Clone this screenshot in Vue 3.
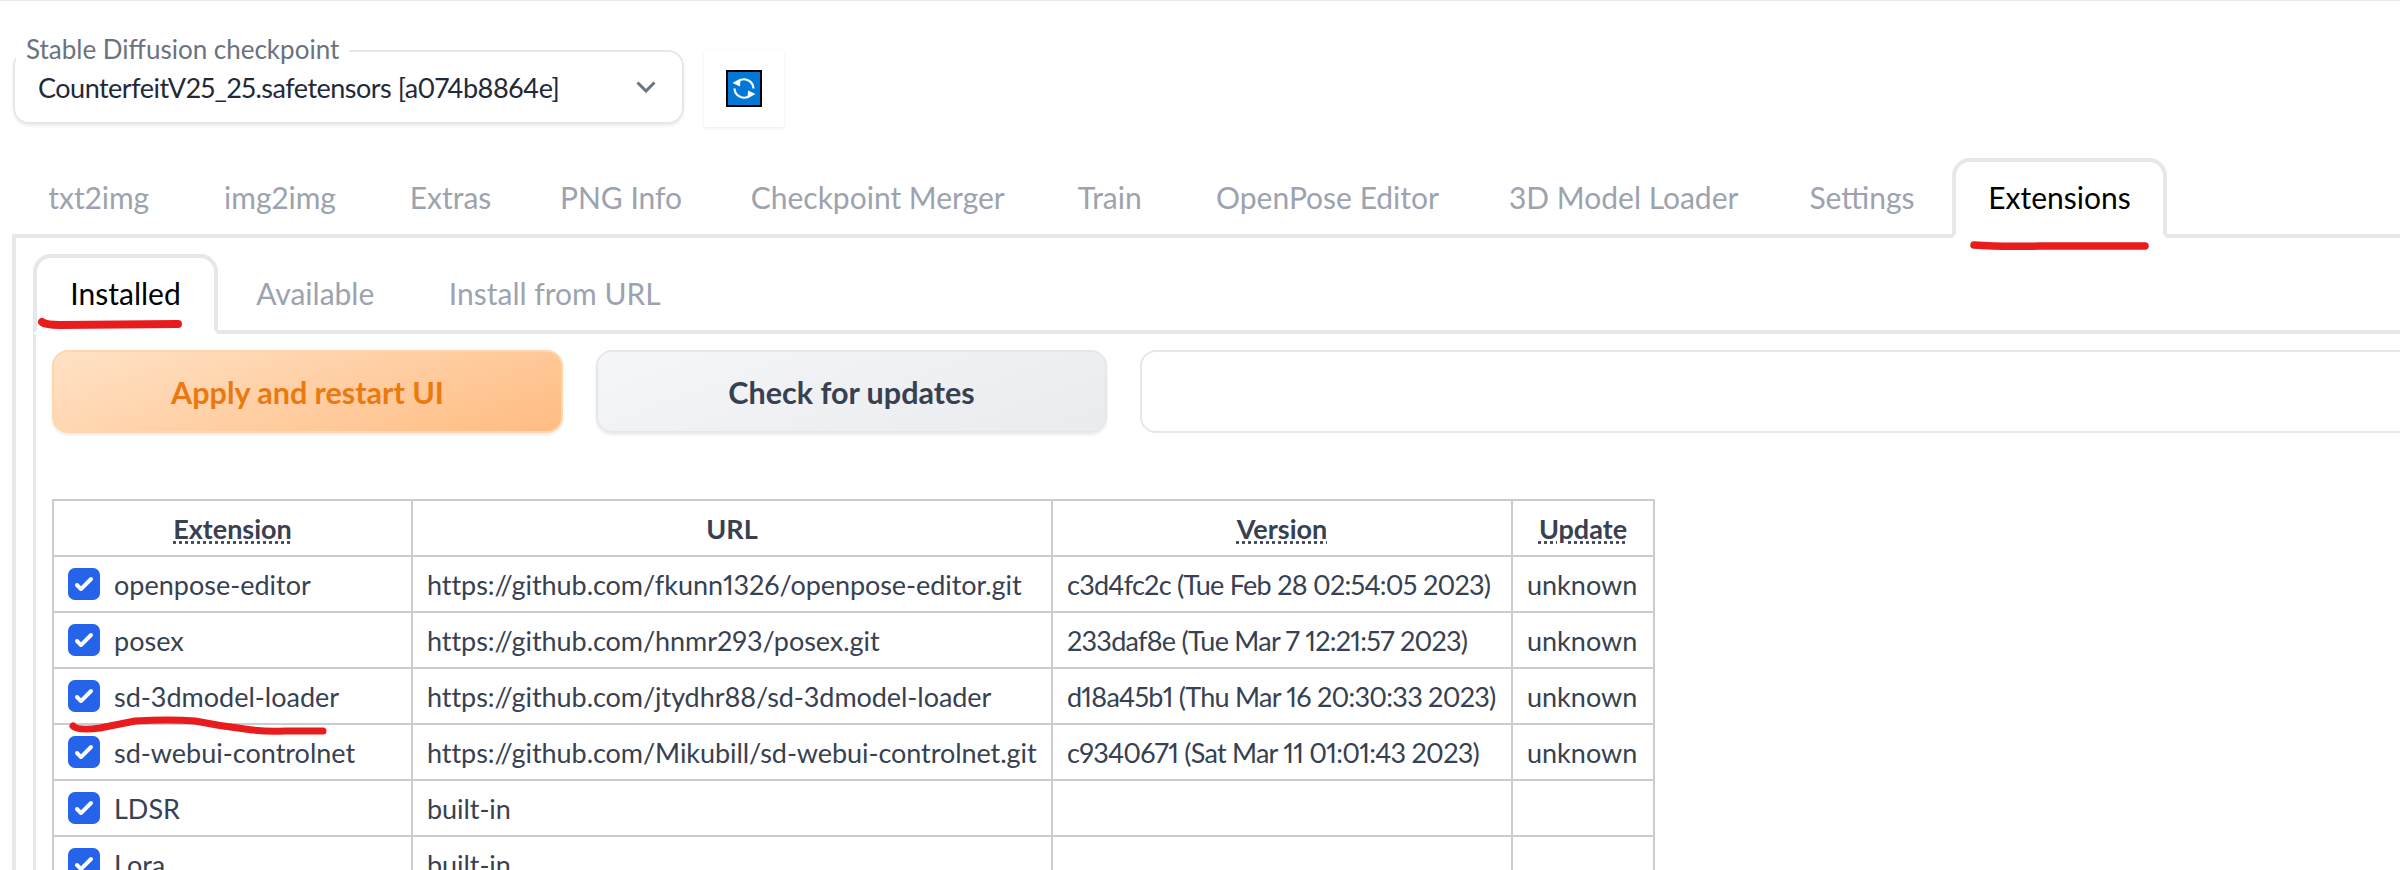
<script setup>
const tabs = [
  { t: 'txt2img', w: 173.5 }, { t: 'img2img', w: 189 }, { t: 'Extras', w: 152 }, { t: 'PNG Info', w: 189 },
  { t: 'Checkpoint Merger', w: 324.5 }, { t: 'Train', w: 139.5 }, { t: 'OpenPose Editor', w: 296 },
  { t: '3D Model Loader', w: 296.5 }, { t: 'Settings', w: 180 }, { t: 'Extensions', w: 215, active: true },
]
const subtabs = [
  { t: 'Installed', w: 185, active: true }, { t: 'Available', w: 194.5 }, { t: 'Install from URL', w: 284.5 },
]
const rows = [
  ['openpose-editor', 'https://github.com/fkunn1326/openpose-editor.git', 'c3d4fc2c (Tue Feb 28 02:54:05 2023)', 'unknown'],
  ['posex', 'https://github.com/hnmr293/posex.git', '233daf8e (Tue Mar 7 12:21:57 2023)', 'unknown'],
  ['sd-3dmodel-loader', 'https://github.com/jtydhr88/sd-3dmodel-loader', 'd18a45b1 (Thu Mar 16 20:30:33 2023)', 'unknown'],
  ['sd-webui-controlnet', 'https://github.com/Mikubill/sd-webui-controlnet.git', 'c9340671 (Sat Mar 11 01:01:43 2023)', 'unknown'],
  ['LDSR', 'built-in', '', ''],
  ['Lora', 'built-in', '', ''],
]
</script>

<template>
  <div class="page">
    <div class="topbar">
      <div class="select">
        <span class="select-label">Stable Diffusion checkpoint</span>
        <span class="select-value">CounterfeitV25_25.safetensors [a074b8864e]</span>
        <svg class="chevron" viewBox="0 0 20 12" fill="none">
          <path d="M1.5 1.5 L10 10 L18.5 1.5" stroke="#6b7280" stroke-width="3" />
        </svg>
      </div>
      <div class="refresh">
        <svg width="36" height="37" viewBox="0 0 36 37">
          <rect x="1" y="1" width="34" height="35" fill="#0078d7" stroke="#000" stroke-width="2" />
          <path d="M27.5 18.5 A9.5 9.5 0 0 0 12 11.5" fill="none" stroke="#fff" stroke-width="2.2" />
          <path d="M8.5 18.5 A9.5 9.5 0 0 0 24 25.5" fill="none" stroke="#fff" stroke-width="2.2" />
          <path d="M6.5 13 L14.5 8.5 L14 16.5 Z M29.5 24 L21.5 28.5 L22 20.5 Z" fill="#fff" />
        </svg>
      </div>
    </div>

    <nav class="tabs">
      <button v-for="tab in tabs" :key="tab.t" class="tab" :class="{ active: tab.active }" :style="{ width: tab.w + 'px' }">{{ tab.t }}</button>
    </nav>

    <section class="panel">
      <nav class="tabs subtabs">
        <button v-for="tab in subtabs" :key="tab.t" class="tab" :class="{ active: tab.active }" :style="{ width: tab.w + 'px' }">{{ tab.t }}</button>
      </nav>
      <div class="inner">
        <div class="actions">
          <button class="btn primary">Apply and restart UI</button>
          <button class="btn secondary">Check for updates</button>
          <div class="textbox"></div>
        </div>
        <table class="ext">
          <colgroup>
            <col class="c1" /><col class="c2" /><col class="c3" /><col class="c4" />
          </colgroup>
          <thead>
            <tr>
              <th><abbr>Extension</abbr></th>
              <th>URL</th>
              <th><abbr>Version</abbr></th>
              <th><abbr>Update</abbr></th>
            </tr>
          </thead>
          <tbody>
            <tr v-for="r in rows" :key="r[0]">
              <td>
                <label class="name">
                  <span class="check">
                    <svg viewBox="0 0 16 16" fill="#fff"><path d="M12.207 4.793a1 1 0 010 1.414l-5 5a1 1 0 01-1.414 0l-2-2a1 1 0 011.414-1.414L6.5 9.086l4.293-4.293a1 1 0 011.414 0z" /></svg>
                  </span>
                  {{ r[0] }}
                </label>
              </td>
              <td class="url">{{ r[1] }}</td>
              <td class="ver">{{ r[2] }}</td>
              <td>{{ r[3] }}</td>
            </tr>
          </tbody>
        </table>
      </div>
    </section>

    <svg class="ink" width="2400" height="870" viewBox="0 0 2400 870" fill="none" stroke="#e81c1c" stroke-linecap="round" stroke-linejoin="round">
      <path d="M42 322 Q46 325 60 325 L178 324" stroke-width="8" />
      <path d="M1974 245 Q2000 247 2040 246 L2145 246" stroke-width="7.5" />
      <path d="M73 726 Q78 731 100 728 Q120 724 135 721 Q170 719 195 721 Q220 726 245 729 Q265 732 285 731 L323 731" stroke-width="7" />
    </svg>
  </div>
</template>

<style>
html, body { margin: 0; overflow: hidden; background: #fff; }
</style>

<style scoped>
.page {
  position: relative;
  width: 2400px;
  height: 870px;
  overflow: hidden;
  box-sizing: border-box;
  border-top: 1px solid #e5e7eb;
  background: #fff;
  font-family: Lato, "Liberation Sans", sans-serif;
  font-variant-numeric: proportional-nums;
  color: #374151;
}
.topbar {
  display: flex;
  align-items: flex-start;
  gap: 20px;
  padding: 49px 0 0 13px;
}
.select {
  position: relative;
  box-sizing: border-box;
  width: 671px;
  height: 74px;
  border: 2px solid #e5e7eb;
  border-radius: 16px;
  box-shadow: 0 2px 3px rgba(0, 0, 0, .08);
  display: flex;
  align-items: center;
  padding: 0 26px 0 23px;
  justify-content: space-between;
}
.select-label {
  position: absolute;
  left: 1px;
  top: -20px;
  padding: 0 10px;
  background: #fff;
  font-size: 26px;
  line-height: 34px;
  color: #6b7280;
}
.select-value { font-size: 27px; letter-spacing: -.5px; color: #1f2937; }
.chevron { width: 20px; height: 12px; }
.refresh {
  width: 80px;
  height: 77px;
  display: flex;
  align-items: center;
  justify-content: center;
  box-shadow: 0 1px 3px rgba(0, 0, 0, .08);
}
.tabs {
  display: flex;
  margin: 31px 0 -4px 12px;
  height: 80px;
  position: relative;
  z-index: 1;
}
.tab {
  box-sizing: border-box;
  height: 80px;
  padding: 0 0 2px;
  border: 4px solid transparent;
  border-radius: 18px 18px 0 0;
  background: none;
  font: inherit;
  font-size: 30px;
  color: #9ca3af;
  white-space: nowrap;
}
.tab.active {
  color: #000;
  background: #fff;
  border-color: #e5e7eb;
  border-bottom-color: #fff;
}
.panel {
  margin-left: 12px;
  width: 2600px;
  box-sizing: border-box;
  height: 640px;
  border: solid #e5e7eb;
  border-width: 4px 0 0 4px;
  padding: 16px 0 0 17px;
}
.subtabs { margin: 0 0 -4px; }
.inner {
  border: solid #e5e7eb;
  border-width: 4px 0 0 3px;
  padding: 16px 0 0 16px;
  height: 600px;
}
.actions { display: flex; height: 83px; gap: 33px; }
.btn {
  box-sizing: border-box;
  width: 511px;
  border: 2px solid;
  border-radius: 16px;
  font: inherit;
  font-size: 30.5px;
  font-weight: 700;
  box-shadow: 0 2px 3px rgba(0, 0, 0, .08);
}
.primary {
  color: #ea7a10;
  border-color: #fed7aa;
  background: linear-gradient(160deg, #ffe2c6, #ffbc82);
}
.secondary {
  color: #374151;
  border-color: #e5e7eb;
  background: linear-gradient(160deg, #f5f6f8, #e9ebee);
}
.textbox {
  flex: 1;
  border: 2px solid #e5e7eb;
  border-radius: 16px;
}
.ext {
  margin-top: 66px;
  width: 1601px;
  table-layout: fixed;
  border-collapse: collapse;
  font-size: 27px;
}
.c1 { width: 359px; }
.c2 { width: 640px; }
.c3 { width: 460px; }
.c4 { width: 142px; }
.ext th, .ext td {
  border: 2px solid #ccc;
  height: 56px;
  padding: 0 14px;
  box-sizing: border-box;
  white-space: nowrap;
  text-align: left;
}
.ext td.url { letter-spacing: -.06px; }
.ext td.ver { letter-spacing: -.75px; }
.ext th { text-align: center; font-weight: 700; }
abbr { text-decoration: underline dotted; text-underline-offset: 3px; }
.name { display: flex; align-items: center; gap: 14px; }
.check {
  width: 32px;
  height: 32px;
  border-radius: 7px;
  background: #2563eb;
  flex: none;
  display: block;
}
.check svg { display: block; width: 32px; height: 32px; }
.ink { position: absolute; left: 0; top: -1px; pointer-events: none; z-index: 2; }
</style>
